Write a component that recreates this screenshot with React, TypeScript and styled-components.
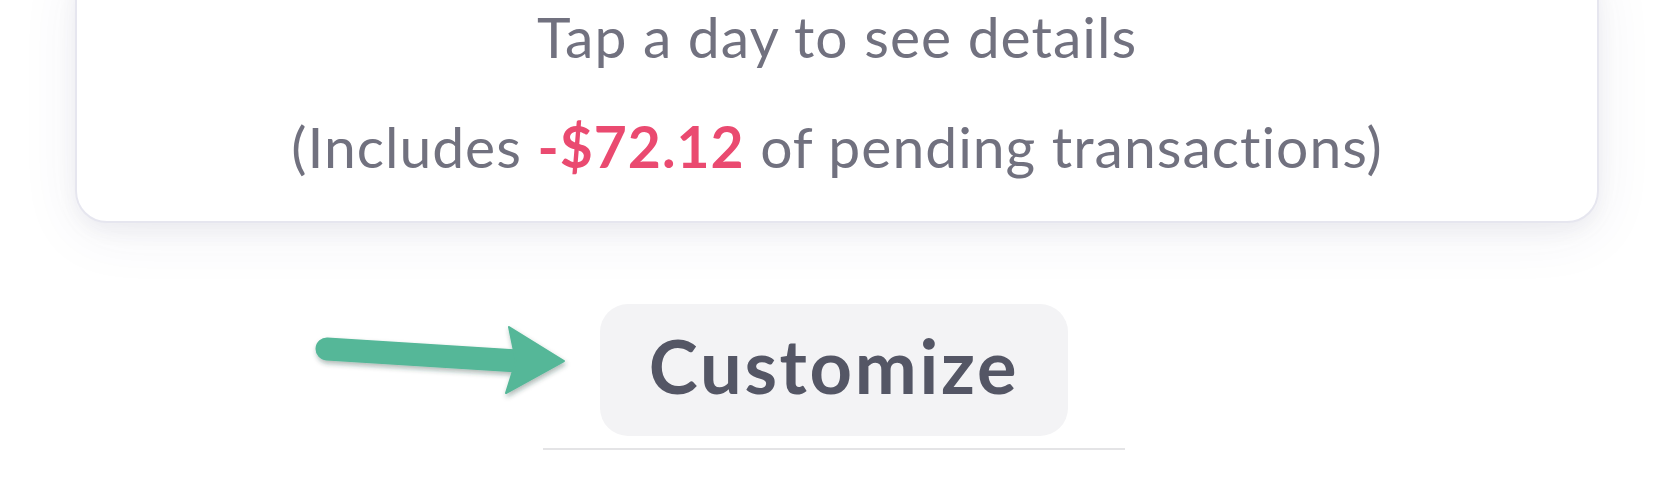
import React from "react";
import styled, { createGlobalStyle } from "styled-components";

const GlobalStyle = createGlobalStyle`
  html, body {
    margin: 0;
    padding: 0;
    background: #ffffff;
    overflow: hidden;
  }
  body {
    font-family: Lato, "Noto Sans", "Liberation Sans", sans-serif;
  }
`;

const Page = styled.div`
  display: flex;
  flex-direction: column;
  align-items: center;
  width: 1668px;
  height: 498px;
`;

const Card = styled.div`
  box-sizing: border-box;
  width: 1524px;
  margin: -40px 0 0 6px;
  padding: 19px 0 20px;
  background: #ffffff;
  border: 2px solid #e6e6ef;
  border-radius: 32px;
  box-shadow: 0 8px 20px rgba(60, 60, 110, 0.06), 0 10px 60px rgba(60, 60, 110, 0.07);
  text-align: center;
`;

const InfoLine = styled.div`
  font-size: 57px;
  line-height: 110px;
  color: #71717f;
  letter-spacing: 1px;
`;

const Pending = styled.span`
  color: #ea4a70;
  font-weight: 700;
`;

const ActionArea = styled.div`
  display: flex;
  flex-direction: column;
  align-items: center;
  margin-top: 81px;
`;

const ButtonRow = styled.div`
  position: relative;
`;

const CustomizeButton = styled.button`
  box-sizing: border-box;
  width: 468px;
  height: 132px;
  padding: 0 0 10px;
  border: none;
  border-radius: 28px;
  background: #f3f3f5;
  color: #545665;
  font-family: Lato, "Noto Sans", "Liberation Sans", sans-serif;
  font-size: 74px;
  font-weight: 700;
  letter-spacing: 2.7px;
  cursor: pointer;
`;

const Divider = styled.div`
  width: 582px;
  height: 2px;
  margin-top: 12px;
  background: #e4e4e6;
`;

const ArrowMark = styled.svg`
  position: absolute;
  left: -304px;
  top: 7px;
  overflow: visible;
`;

const Arrow: React.FC = () => (
  <ArrowMark width="280" height="100" viewBox="0 0 280 100">
    <defs>
      <filter id="arrowShadow" x="-10%" y="-30%" width="120%" height="160%">
        <feDropShadow dx="1" dy="3" stdDeviation="2.5" floodColor="#1d3d33" floodOpacity="0.35" />
      </filter>
    </defs>
    <g filter="url(#arrowShadow)" fill="#55b798" stroke="#55b798">
      <line x1="31" y1="38" x2="222" y2="50" strokeWidth="23" strokeLinecap="round" />
      <polygon points="213,16 268,50 210,82 220,50" strokeWidth="2" strokeLinejoin="round" />
    </g>
  </ArrowMark>
);

export default function App() {
  return (
    <>
      <GlobalStyle />
      <Page>
        <Card>
          <InfoLine>Tap a day to see details</InfoLine>
          <InfoLine>
            (Includes <Pending>-$72.12</Pending> of pending transactions)
          </InfoLine>
        </Card>
        <ActionArea>
          <ButtonRow>
            <Arrow />
            <CustomizeButton>Customize</CustomizeButton>
          </ButtonRow>
          <Divider />
        </ActionArea>
      </Page>
    </>
  );
}
